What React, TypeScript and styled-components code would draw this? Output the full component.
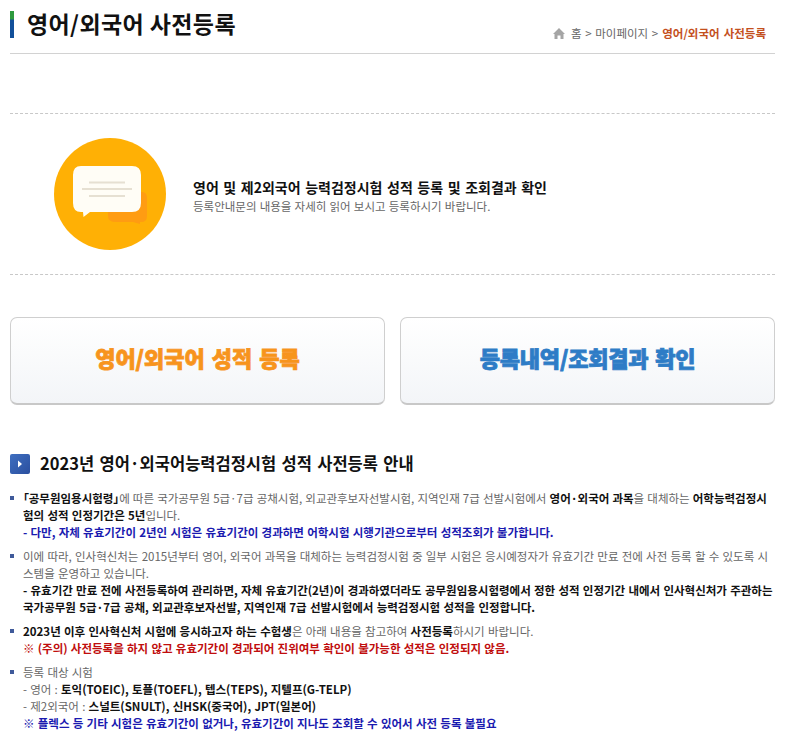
import React from "react";
import styled, { createGlobalStyle } from "styled-components";

const Global = createGlobalStyle`
  html, body { margin: 0; padding: 0; background: #fff; overflow: hidden; height: 737px; }
  body { font-family: "Noto Sans CJK KR", "Noto Sans", sans-serif; }
  * { box-sizing: border-box; }
`;

const Page = styled.div`
  width: 786px;
  height: 737px;
  padding: 0 11px 0 10px;
  overflow: hidden;
`;

const Header = styled.header`
  height: 54px;
  border-bottom: 1px solid #d2d2d2;
  display: flex;
  align-items: flex-start;
  justify-content: space-between;
`;

const Title = styled.h1`
  margin: 11px 0 0;
  height: 27px;
  padding-left: 13px;
  border-left: 4px solid;
  border-image: linear-gradient(#2e9a3e 30%, #12509a 36%) 1;
  font-size: 23px;
  line-height: 24px;
  font-weight: 700;
  color: #111;
  letter-spacing: 0.4px;
`;

const Crumbs = styled.nav`
  margin: 25px 9px 0 0;
  display: flex;
  align-items: center;
  height: 16px;
  font-size: 11.5px;
  word-spacing: 1.1px;
  color: #666;
  svg { margin-right: 6px; }
`;

const Current = styled.strong`
  color: #c4501e;
  font-weight: 700;
  margin-left: 4px;
  word-spacing: 1.5px;
`;

const Intro = styled.section`
  margin-top: 59px;
  height: 162px;
  border-top: 1px dashed #c8c8c8;
  border-bottom: 1px dashed #c8c8c8;
  display: flex;
  align-items: center;
  gap: 27px;
  padding: 0 0 0 44px;
`;

const IntroText = styled.div`
  display: flex;
  flex-direction: column;
  gap: 1px;
  margin-top: 2px;
`;

const IntroTitle = styled.div`
  font-size: 14px;
  line-height: 20px;
  font-weight: 700;
  word-spacing: 1.4px;
  color: #111;
`;

const IntroSub = styled.div`
  font-size: 11.5px;
  line-height: 16px;
  word-spacing: 0.6px;
  color: #666;
`;

const Buttons = styled.div`
  margin-top: 42px;
  display: grid;
  grid-template-columns: 375px 375px;
  gap: 15px;
`;

const BigButton = styled.a<{ $color: string; $spacing: string }>`
  height: 88px;
  padding-bottom: 8px;
  border: 1px solid #cfcfcf;
  border-bottom: 2px solid #c8c8c8;
  border-radius: 7px;
  background: linear-gradient(#fff, #f3f5f8);
  display: flex;
  align-items: center;
  justify-content: center;
  font-size: 22px;
  font-weight: 900;
  word-spacing: 2px;
  letter-spacing: ${(p) => p.$spacing};
  color: ${(p) => p.$color};
  -webkit-text-stroke: 0.8px ${(p) => p.$color};
`;

const SectionHead = styled.h2`
  margin: 47px 0 0;
  display: flex;
  align-items: center;
  gap: 10px;
  height: 22px;
  font-size: 16.5px;
  font-weight: 700;
  word-spacing: 1.6px;
  color: #111;
`;

const HeadIcon = styled.span`
  width: 20px;
  height: 20px;
  margin-top: 2px;
  border-radius: 2px;
  background: linear-gradient(135deg, #3f6fc0, #2b4f9f);
  display: flex;
  align-items: center;
  justify-content: center;
`;

const List = styled.ul`
  list-style: none;
  margin: 16px 0 0;
  padding: 0;
  display: flex;
  flex-direction: column;
  gap: 7px;
`;

const Item = styled.li`
  position: relative;
  padding-left: 13px;
  font-size: 11.5px;
  line-height: 17px;
  word-spacing: 0.65px;
  color: #666;
  &::before {
    content: "";
    position: absolute;
    left: 0;
    top: 6px;
    width: 4px;
    height: 4px;
    background: #3f5a9a;
  }
`;

const Line = styled.div`
  white-space: nowrap;
`;

const FirstLine = styled(Line)`
  word-spacing: 0.55px;
`;

const B = styled.strong`
  font-weight: 700;
  color: #111;
`;

const Bracket = styled.span`
  font-feature-settings: "palt";
`;

const Note = styled.strong<{ $color: string }>`
  display: block;
  font-weight: 700;
  white-space: nowrap;
  color: ${(p) => p.$color};
`;

export default function App() {
  return (
    <Page>
      <Global />
      <Header>
        <Title>영어/외국어 사전등록</Title>
        <Crumbs>
          <svg width="12" height="11" viewBox="0 0 12 11" aria-hidden="true">
            <path d="M6 0 L12 6 L10.5 6 L10.5 11 L7.5 11 L7.5 7.5 L4.5 7.5 L4.5 11 L1.5 11 L1.5 6 L0 6 Z" fill="#a5a5a5" />
          </svg>
          홈 &gt; 마이페이지 &gt;<Current>영어/외국어 사전등록</Current>
        </Crumbs>
      </Header>
      <Intro>
        <svg width="112" height="112" viewBox="0 0 112 112" aria-hidden="true">
          <circle cx="56" cy="56" r="56" fill="#ffb005" />
          <path d="M60 54 H88 Q93 54 93 60 V78 Q93 84 87 84 H86 L86 86 L79 84 H62 Q54 84 54 78 V60 Z" fill="#ff9c12" />
          <path d="M27 28 H78 Q87 28 87 37 V65 Q87 74 78 74 H36 L29.5 79 L29 74 H27 Q19 74 19 65 V37 Q19 28 27 28 Z" fill="#fffdf6" />
          <path d="M35 44.5 H71 M28 51 H78 M35 58 H71" stroke="#e6e0d2" strokeWidth="2.2" fill="none" />
        </svg>
        <IntroText>
          <IntroTitle>영어 및 제2외국어 능력검정시험 성적 등록 및 조회결과 확인</IntroTitle>
          <IntroSub>등록안내문의 내용을 자세히 읽어 보시고 등록하시기 바랍니다.</IntroSub>
        </IntroText>
      </Intro>
      <Buttons>
        <BigButton $color="#f7941d" $spacing="0">영어/외국어 성적 등록</BigButton>
        <BigButton $color="#2e7cc6" $spacing="-0.2px">등록내역/조회결과 확인</BigButton>
      </Buttons>
      <SectionHead>
        <HeadIcon>
          <svg width="6" height="8" viewBox="0 0 6 8" aria-hidden="true">
            <path d="M1 0.5 L5 4 L1 7.5 Z" fill="#fff" />
          </svg>
        </HeadIcon>
        2023년 영어·외국어능력검정시험 성적 사전등록 안내
      </SectionHead>
      <List>
        <Item>
          <FirstLine><B><Bracket>「</Bracket>공무원임용시험령<Bracket>」</Bracket></B>에 따른 국가공무원 5급·7급 공채시험, 외교관후보자선발시험, 지역인재 7급 선발시험에서 <B>영어·외국어 과목</B>을 대체하는 <B>어학능력검정시</B></FirstLine>
          <Line><B>험의 성적 인정기간은 5년</B>입니다.</Line>
          <Note $color="#1a1ab0">- 다만, 자체 유효기간이 2년인 시험은 유효기간이 경과하면 어학시험 시행기관으로부터 성적조회가 불가합니다.</Note>
        </Item>
        <Item>
          <Line>이에 따라, 인사혁신처는 2015년부터 영어, 외국어 과목을 대체하는 능력검정시험 중 일부 시험은 응시예정자가 유효기간 만료 전에 사전 등록 할 수 있도록 시</Line>
          <Line>스템을 운영하고 있습니다.</Line>
          <Note $color="#111">- 유효기간 만료 전에 사전등록하여 관리하면, 자체 유효기간(2년)이 경과하였더라도 공무원임용시험령에서 정한 성적 인정기간 내에서 인사혁신처가 주관하는</Note>
          <Note $color="#111">국가공무원 5급·7급 공채, 외교관후보자선발, 지역인재 7급 선발시험에서 능력검정시험 성적을 인정합니다.</Note>
        </Item>
        <Item>
          <Line><B>2023년 이후 인사혁신처 시험에 응시하고자 하는 수험생</B>은 아래 내용을 참고하여 <B>사전등록</B>하시기 바랍니다.</Line>
          <Note $color="#c00d0d">※ (주의) 사전등록을 하지 않고 유효기간이 경과되어 진위여부 확인이 불가능한 성적은 인정되지 않음.</Note>
        </Item>
        <Item>
          <Line>등록 대상 시험</Line>
          <Line>- 영어 : <B>토익(TOEIC), 토플(TOEFL), 텝스(TEPS), 지텔프(G-TELP)</B></Line>
          <Line>- 제2외국어 : <B>스널트(SNULT), 신HSK(중국어), JPT(일본어)</B></Line>
          <Note $color="#1a1ab0">※ 플렉스 등 기타 시험은 유효기간이 없거나, 유효기간이 지나도 조회할 수 있어서 사전 등록 불필요</Note>
        </Item>
      </List>
    </Page>
  );
}
